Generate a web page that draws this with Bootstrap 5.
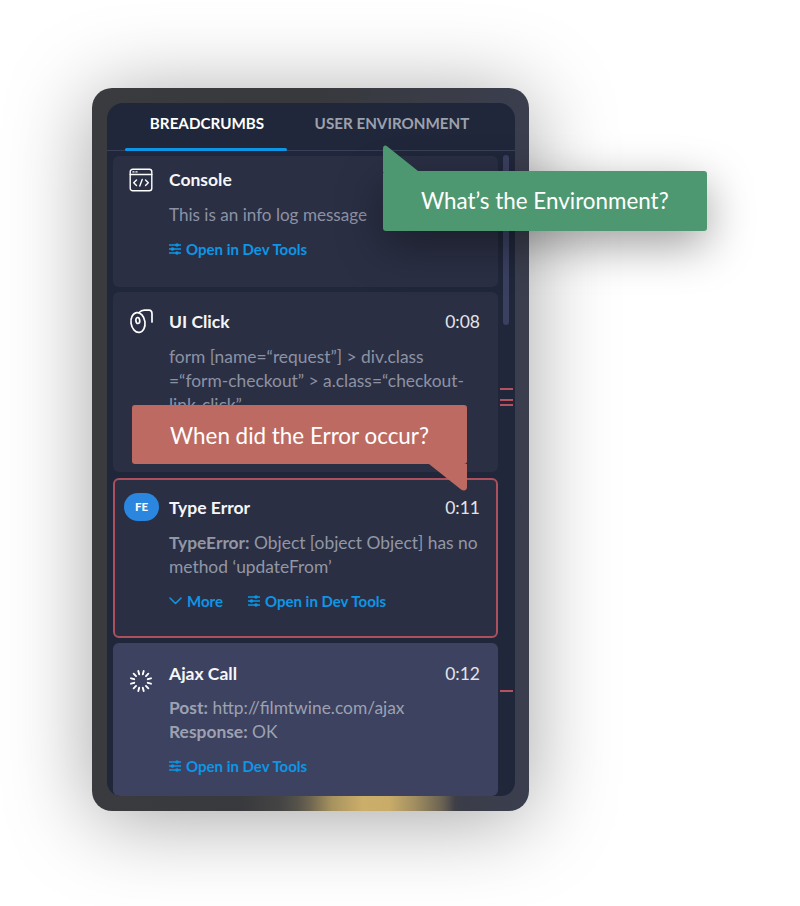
<!DOCTYPE html>
<html lang="en">
<head>
<meta charset="utf-8">
<title>Breadcrumbs</title>
<link href="https://cdn.jsdelivr.net/npm/bootstrap@5.3.0/dist/css/bootstrap.min.css" rel="stylesheet">
<style>
html,body{margin:0;height:906px;overflow:hidden;background:#fff;}
body{font-family:"Lato","Liberation Sans",sans-serif;padding:88px 0 0 92px;}
.phone-frame{position:relative;width:437px;height:723px;border-radius:20px;background:linear-gradient(90deg,#393b3e 0%,#38393d 50%,#3b3e4e 100%);box-shadow:0 8px 85px rgba(0,0,0,.36);padding:15px 14px 0 15px;}
.phone-screen{position:relative;height:693px;background:#20273a;border-radius:16px 16px 14px 14px;overflow:hidden;}
.gold-strip{height:15px;margin:0 -14px 0 -15px;background:linear-gradient(90deg,transparent 34%,#454444 43%,#55524a 47%,#6f6650 50%,#a8935f 55%,#cbae69 62%,#c8ac68 68%,#a08d60 74%,#6b6352 80%,#55514f 81.600%,#3f3f47 83%,transparent 85%);}
.tab-bar{height:48px;border-bottom:1px solid #3a4058;flex:none;}
.tab-item{font-size:15.2px;font-weight:700;color:#9ca1ad;line-height:41px;position:relative;text-align:center;white-space:nowrap;}
.tab-a{width:162px;margin-left:18px;color:#fff;padding-left:2px;}
.tab-a::after{content:"";position:absolute;left:0;right:0;top:45px;height:3px;background:#0d96e6;border-radius:2px;}
.tab-b{width:174px;margin-left:18px;}
.crumb-list{padding:5px 17px 0 6px;gap:5px;}
.crumb{position:relative;background:#2a2f44;border-radius:6px;padding:12px 18px 0 56px;color:#fff;overflow:hidden;flex:none;}
.c1{height:131px;}
.c2{height:180px;padding-top:18px;}
.c3{height:160px;margin-top:1px;border:2px solid #ad505e;padding:16px 16px 0 54px;}
.c4{height:153px;background:#3c4260;padding-top:19px;}
.crumb-head{font-size:17.5px;font-weight:700;line-height:24px;color:#f6f6f8;}
.crumb-time{font-weight:400;color:#e3e4e8;}
.crumb-body{font-size:17.4px;line-height:24px;color:#8d92a3;margin-top:11px;}
.c1 .crumb-body{font-size:17.1px;}
.c4 .crumb-body{color:#9da1b1;margin-top:10px;}
.c3 .crumb-body{margin-top:11px;color:#9297a6;}
.crumb-body b{font-weight:700;}
.crumb-link{font-size:15px;font-weight:700;color:#0d96e6;line-height:24px;margin-top:10px;gap:25px;}
.crumb-link span{gap:5px;}
.crumb-ico{position:absolute;left:16px;top:12px;}
.c2 .crumb-ico{top:17px;left:16px;}
.c4 .crumb-ico{top:26px;}
.fe-pill{position:absolute;left:9px;top:13px;width:35px;height:28px;border-radius:14px;background:#2b86df;color:#fff;font-size:11.5px;font-weight:900;line-height:28px;text-align:center;}
.scroll-thumb{position:absolute;left:396px;top:52px;width:6px;height:170px;border-radius:3px;background:#3a4060;}
.tick{position:absolute;left:393px;width:13px;height:2px;background:#b5525f;}
.note{position:absolute;color:#fff;font-size:22.4px;border-radius:3px;z-index:5;white-space:nowrap;}
.note svg{position:absolute;}
.note-green{left:291px;top:83px;width:324px;height:60px;line-height:60px;background:#4e9871;padding-left:38px;box-shadow:0 14px 46px rgba(0,0,0,.38);}
.note-green svg{left:0;top:-26px;}
.note-red{left:40px;top:317px;width:335px;height:59px;line-height:61px;background:#bd6b62;padding-left:38px;}
.note-red svg{left:297px;top:59px;}
</style>
</head>
<body>
<div class="phone-frame">
  <div class="phone-screen d-flex flex-column">
    <div class="tab-bar d-flex">
      <div class="tab-item tab-a">BREADCRUMBS</div>
      <div class="tab-item tab-b">USER ENVIRONMENT</div>
    </div>
    <div class="crumb-list d-flex flex-column">
      <div class="crumb c1">
        <svg class="crumb-ico" width="24" height="24" viewBox="0 0 24 24" fill="none" stroke="#fff" stroke-width="1.4" stroke-linecap="round" stroke-linejoin="round"><rect x="1.2" y="1.2" width="21.600" height="21.600" rx="2.500"/><path d="M1.200 6.500H22.800"/><path d="M4 3.900h1M7 3.900h1"/><path d="M7.500 12 4.700 14.800l2.800 2.800M16.500 12l2.800 2.800-2.800 2.800M13.200 11.500l-2.400 6.600"/></svg>
        <div class="crumb-head">Console</div>
        <div class="crumb-body">This is an info log message</div>
        <div class="crumb-link d-flex"><span class="d-inline-flex align-items-center"><svg width="12" height="12" viewBox="0 0 12 12" fill="#0d96e6" stroke="#0d96e6" stroke-width="1.3"><path d="M0 2h12M0 6h12M0 10h12"/><circle cx="8" cy="2" r="1.100"/><circle cx="3.500" cy="6" r="1.100"/><circle cx="8" cy="10" r="1.100"/></svg>Open in Dev Tools</span></div>
      </div>
      <div class="crumb c2">
        <svg class="crumb-ico" width="24" height="26" viewBox="0 0 24 26" fill="none" stroke="#fff" stroke-width="1.7" stroke-linecap="round" stroke-linejoin="round"><ellipse cx="9" cy="13.500" rx="7" ry="10" transform="rotate(-8 9 13.500)"/><ellipse cx="8.800" cy="11.500" rx="1.900" ry="3" transform="rotate(-8 8.800 11.500)"/><path d="M10 3.500C11.500 2 13.500 1.200 15.500 1.200h4.500c2 0 3 1.300 3 3.800v8"/></svg>
        <div class="crumb-head d-flex justify-content-between"><span>UI Click</span><span class="crumb-time">0:08</span></div>
        <div class="crumb-body">form [name=“request”] &gt; div.class<br>=“form-checkout” &gt; a.class=“checkout-<br>link-click”</div>
      </div>
      <div class="crumb c3">
        <div class="fe-pill">FE</div>
        <div class="crumb-head d-flex justify-content-between"><span>Type Error</span><span class="crumb-time">0:11</span></div>
        <div class="crumb-body"><b>TypeError:</b> Object [object Object] has no<br>method ‘updateFrom’</div>
        <div class="crumb-link d-flex">
          <span class="d-inline-flex align-items-center"><svg width="13" height="8" viewBox="0 0 13 8" fill="none" stroke="#0d96e6" stroke-width="1.6" stroke-linecap="round" stroke-linejoin="round"><path d="M1 1l5.500 5.500L12 1"/></svg>More</span>
          <span class="d-inline-flex align-items-center"><svg width="12" height="12" viewBox="0 0 12 12" fill="#0d96e6" stroke="#0d96e6" stroke-width="1.3"><path d="M0 2h12M0 6h12M0 10h12"/><circle cx="8" cy="2" r="1.100"/><circle cx="3.500" cy="6" r="1.100"/><circle cx="8" cy="10" r="1.100"/></svg>Open in Dev Tools</span>
        </div>
      </div>
      <div class="crumb c4">
        <svg class="crumb-ico" width="24" height="24" viewBox="0 0 24 24" fill="none" stroke="#fff" stroke-width="1.900" stroke-linecap="round"><path d="M13.810 5.240 14.700 2M16.950 7.050l2.400-2.400M18.760 10.190 22 9.320M18.760 13.810 22 14.680M16.950 16.950l2.400 2.400M13.810 18.760 14.700 22M10.190 18.760 9.300 22M7.050 16.950l-2.400 2.400M5.240 13.810 2 14.680M5.240 10.190 2 9.320M7.050 7.050l-2.400-2.400M10.190 5.240 9.300 2"/></svg>
        <div class="crumb-head d-flex justify-content-between"><span>Ajax Call</span><span class="crumb-time">0:12</span></div>
        <div class="crumb-body"><b>Post:</b> http://filmtwine.com/ajax<br><b>Response:</b> OK</div>
        <div class="crumb-link d-flex"><span class="d-inline-flex align-items-center"><svg width="12" height="12" viewBox="0 0 12 12" fill="#0d96e6" stroke="#0d96e6" stroke-width="1.3"><path d="M0 2h12M0 6h12M0 10h12"/><circle cx="8" cy="2" r="1.100"/><circle cx="3.500" cy="6" r="1.100"/><circle cx="8" cy="10" r="1.100"/></svg>Open in Dev Tools</span></div>
      </div>
    </div>
    <div class="scroll-thumb"></div>
    <div class="tick" style="top:285px"></div>
    <div class="tick" style="top:296px"></div>
    <div class="tick" style="top:301px"></div>
    <div class="tick" style="top:587px"></div>
  </div>
  <div class="gold-strip"></div>
  <div class="note note-green"><svg width="36" height="27" viewBox="0 0 36 27"><path d="M0 27V3.500C0 .8 2 -.3 4 1.200L35 26v1z" fill="#4e9871"/></svg>What’s the Environment?</div>
  <div class="note note-red">When did the Error occur?<svg width="38" height="28" viewBox="0 0 38 28"><path d="M0 0 32 25.500C35 27.500 38 26.500 38 23V0z" fill="#bd6b62"/></svg></div>
</div>
</body>
</html>
